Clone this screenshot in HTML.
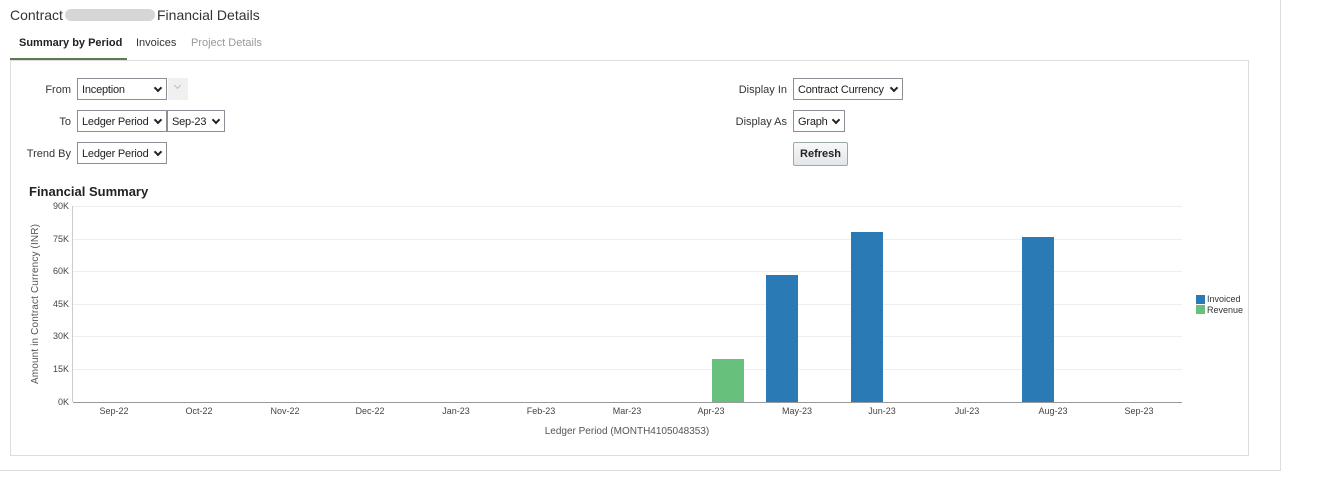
<!DOCTYPE html>
<html><head><style>
body{margin:0;background:#fff;font-family:"Liberation Sans",Arial,sans-serif;width:1317px;height:479px;overflow:hidden;position:relative}
.a{position:absolute}
.sel{position:absolute;height:22px;border:1px solid #8a8f96;background:#fff;font-size:11px;line-height:22px;padding-left:4px;box-sizing:border-box;color:#222;letter-spacing:-0.2px}
.sel:after{content:"";position:absolute;right:5px;top:6px;width:4px;height:4px;border-right:2px solid #222;border-bottom:2px solid #222;transform:rotate(45deg)}
.lbl{position:absolute;font-size:11px;color:#333;text-align:right}
</style></head><body>
<div class="a" style="left:0;top:0;width:1280px;height:470px;border-right:1px solid #ddd;border-bottom:1px solid #ddd"></div>
<div class="a" style="left:10px;top:7px;font-size:14px;color:#333">Contract</div>
<div class="a" style="left:65px;top:9px;width:90px;height:12px;border-radius:6px;background:#d6d6d6"></div>
<div class="a" style="left:157px;top:7px;font-size:14px;color:#333">Financial Details</div>
<div class="a" style="left:19px;top:37px;font-size:11px;font-weight:bold;color:#222">Summary by Period</div>
<div class="a" style="left:136px;top:37px;font-size:11px;color:#333">Invoices</div>
<div class="a" style="left:191px;top:37px;font-size:11px;color:#999">Project Details</div>
<div class="a" style="left:10px;top:58px;width:117px;height:3px;background:#5e7a52"></div>
<div class="a" style="left:10px;top:60px;width:1237px;height:394px;border:1px solid #ddd"></div>
<div class="lbl" style="left:20px;width:51px;top:84px">From</div>
<div class="sel" style="left:77px;top:78px;width:90px">Inception</div>
<div class="a" style="left:168px;top:78px;width:20px;height:22px;background:#f0f0f0"></div>
<div class="a" style="left:175px;top:83px;width:4px;height:4px;border-right:1.5px solid #bbb;border-bottom:1.5px solid #bbb;transform:rotate(45deg)"></div>
<div class="lbl" style="left:20px;width:51px;top:116px">To</div>
<div class="sel" style="left:77px;top:110px;width:90px">Ledger Period</div>
<div class="sel" style="left:167px;top:110px;width:58px">Sep-23</div>
<div class="lbl" style="left:10px;width:61px;top:148px">Trend By</div>
<div class="sel" style="left:77px;top:142px;width:90px">Ledger Period</div>
<div class="lbl" style="left:700px;width:87px;top:84px">Display In</div>
<div class="sel" style="left:793px;top:78px;width:110px">Contract Currency</div>
<div class="lbl" style="left:700px;width:87px;top:116px">Display As</div>
<div class="sel" style="left:793px;top:110px;width:52px">Graph</div>
<div class="a" style="left:793px;top:142px;width:55px;height:24px;border:1px solid #9aa;border-radius:2px;background:linear-gradient(#f7f8f9,#e3e6e9);box-sizing:border-box;font-size:11px;font-weight:bold;text-align:center;line-height:23px;color:#222">Refresh</div>
<div class="a" style="left:29px;top:184px;font-size:13px;font-weight:bold;color:#222">Financial Summary</div>
<svg class="a" style="left:0;top:0" width="1317" height="479">
<g stroke="#eee" stroke-width="1">
<line x1="73" x2="1182" y1="206.5" y2="206.5"/><line x1="73" x2="1182" y1="239.5" y2="239.5"/><line x1="73" x2="1182" y1="271.5" y2="271.5"/><line x1="73" x2="1182" y1="304.5" y2="304.5"/><line x1="73" x2="1182" y1="336.5" y2="336.5"/><line x1="73" x2="1182" y1="369.5" y2="369.5"/></g>
<line x1="73" x2="1182" y1="402.5" y2="402.5" stroke="#999"/>
<line x1="72.5" x2="72.5" y1="206" y2="402" stroke="#ccc"/>
<g font-size="9" fill="#444" text-anchor="end" font-family="Liberation Sans">
<text x="69" y="209">90K</text><text x="69" y="242">75K</text><text x="69" y="274">60K</text><text x="69" y="307">45K</text><text x="69" y="339">30K</text><text x="69" y="372">15K</text><text x="69" y="405">0K</text></g>
<g font-size="9" fill="#444" text-anchor="middle" font-family="Liberation Sans">
<text x="114" y="414">Sep-22</text><text x="199" y="414">Oct-22</text><text x="285" y="414">Nov-22</text><text x="370" y="414">Dec-22</text><text x="456" y="414">Jan-23</text><text x="541" y="414">Feb-23</text><text x="627" y="414">Mar-23</text><text x="711" y="414">Apr-23</text><text x="797" y="414">May-23</text><text x="882" y="414">Jun-23</text><text x="967" y="414">Jul-23</text><text x="1053" y="414">Aug-23</text><text x="1139" y="414">Sep-23</text></g>
<text x="627" y="434" font-size="10" fill="#555" text-anchor="middle" font-family="Liberation Sans">Ledger Period (MONTH4105048353)</text>
<text transform="translate(38,304) rotate(-90)" font-size="10" fill="#555" text-anchor="middle" font-family="Liberation Sans" textLength="160">Amount in Contract Currency (INR)</text>
<rect x="712" y="359" width="32" height="43" fill="#67c07b"/>
<rect x="766" y="275" width="32" height="127" fill="#2a7ab5"/>
<rect x="851" y="232" width="32" height="170" fill="#2a7ab5"/>
<rect x="1022" y="237" width="32" height="165" fill="#2a7ab5"/>
<rect x="1196" y="295" width="9" height="9" fill="#2a7ab5"/>
<rect x="1196" y="305" width="9" height="9" fill="#67c07b"/>
<text x="1207" y="302" font-size="9" fill="#333" font-family="Liberation Sans">Invoiced</text>
<text x="1207" y="313" font-size="9" fill="#333" font-family="Liberation Sans">Revenue</text>
</svg>
</body></html>
